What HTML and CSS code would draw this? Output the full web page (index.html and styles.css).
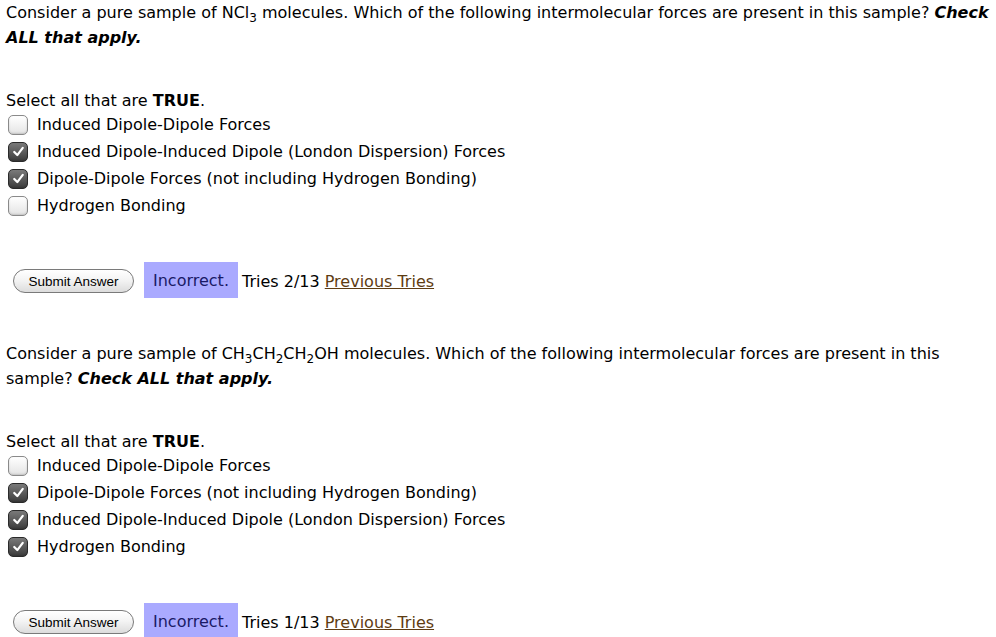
FILE: index.html
```html
<!DOCTYPE html>
<html>
<head>
  <title>Intermolecular Forces</title>
  <link rel="stylesheet" href="styles.css">
</head>
<body>
  <!-- Pergunta 1 -->
  <div class="questao">
    <p class="enunciado">Consider a pure sample of NCl<sub>3</sub> molecules. Which of the following intermolecular forces are present in this sample? <b><i>Check ALL that apply.</i></b></p>
    <p class="instrucao">Select all that are <b>TRUE</b>.</p>
    <ul class="opcoes">
      <li><span class="caixa"></span>Induced Dipole-Dipole Forces</li>
      <li><span class="caixa marcada"><svg viewBox="0 0 20 20"><path d="M5 10.5 L8.6 14.2 L15 5.8" /></svg></span>Induced Dipole-Induced Dipole (London Dispersion) Forces</li>
      <li><span class="caixa marcada"><svg viewBox="0 0 20 20"><path d="M5 10.5 L8.6 14.2 L15 5.8" /></svg></span>Dipole-Dipole Forces (not including Hydrogen Bonding)</li>
      <li><span class="caixa"></span>Hydrogen Bonding</li>
    </ul>
    <div class="resposta">
      <button class="botao-enviar">Submit Answer</button>
      <span class="incorreto">Incorrect.</span>
      <span class="tentativas">Tries 2/13 <a href="#">Previous Tries</a></span>
    </div>
  </div>

  <!-- Pergunta 2 -->
  <div class="questao">
    <p class="enunciado">Consider a pure sample of CH<sub>3</sub>CH<sub>2</sub>CH<sub>2</sub>OH molecules. Which of the following intermolecular forces are present in this sample? <b><i>Check ALL that apply.</i></b></p>
    <p class="instrucao">Select all that are <b>TRUE</b>.</p>
    <ul class="opcoes">
      <li><span class="caixa"></span>Induced Dipole-Dipole Forces</li>
      <li><span class="caixa marcada"><svg viewBox="0 0 20 20"><path d="M5 10.5 L8.6 14.2 L15 5.8" /></svg></span>Dipole-Dipole Forces (not including Hydrogen Bonding)</li>
      <li><span class="caixa marcada"><svg viewBox="0 0 20 20"><path d="M5 10.5 L8.6 14.2 L15 5.8" /></svg></span>Induced Dipole-Induced Dipole (London Dispersion) Forces</li>
      <li><span class="caixa marcada"><svg viewBox="0 0 20 20"><path d="M5 10.5 L8.6 14.2 L15 5.8" /></svg></span>Hydrogen Bonding</li>
    </ul>
    <div class="resposta">
      <button class="botao-enviar">Submit Answer</button>
      <span class="incorreto">Incorrect.</span>
      <span class="tentativas">Tries 1/13 <a href="#">Previous Tries</a></span>
    </div>
  </div>
</body>
</html>
```

FILE: styles.css
```css
/* Página base */
body {
  margin: 0;
  padding: 0 0 0 6px;
  background-color: #ffffff;
  color: #000000;
  font-family: "DejaVu Sans", Verdana, sans-serif;
  font-size: 16px;
}

.questao {
  margin-bottom: 43px;
}

.questao:last-child {
  margin-bottom: 0;
}

.enunciado {
  margin: 0;
  line-height: 25px;
}

sub {
  font-size: 12px;
  line-height: 12px;
  vertical-align: -4px;
}

.instrucao {
  margin: 40px 0 0 0;
  line-height: 21px;
}

.opcoes {
  list-style: none;
  margin: 0;
  padding: 0;
}

.opcoes li {
  display: flex;
  align-items: center;
  height: 27px;
}

.caixa {
  box-sizing: border-box;
  width: 20px;
  height: 20px;
  margin: 0 9px 0 2px;
  border: 1px solid #8a8a8a;
  border-radius: 5px;
  background: linear-gradient(#ffffff, #e4e4e4);
  box-shadow: inset 0 -1px 2px rgba(0, 0, 0, 0.15);
  display: flex;
  align-items: center;
  justify-content: center;
}

.caixa.marcada {
  border-color: #2a2a2a;
  background: linear-gradient(#7a7a7a, #3c3c3c);
}

.caixa svg {
  width: 17px;
  height: 17px;
}

.caixa svg path {
  fill: none;
  stroke: #ffffff;
  stroke-width: 2.6;
  stroke-linecap: round;
  stroke-linejoin: round;
}

.resposta {
  display: flex;
  align-items: center;
  height: 36px;
  margin-top: 43px;
}

.botao-enviar {
  box-sizing: border-box;
  width: 121px;
  height: 24px;
  margin: 2px 10px 0 7px;
  padding: 0;
  border: 1px solid #7a7a7a;
  border-radius: 12px;
  background: linear-gradient(#ffffff, #f4f4f4 45%, #dcdcdc);
  font-family: "Liberation Sans", Arial, sans-serif;
  font-size: 13.5px;
  color: #000000;
}

.incorreto {
  box-sizing: border-box;
  width: 94px;
  height: 36px;
  line-height: 38px;
  padding-left: 9px;
  background-color: #aaaaff;
  color: #1a1a66;
}

.tentativas {
  margin-left: 4px;
  padding-top: 2px;
}

.tentativas a {
  color: #5e3c12;
  text-decoration: underline;
}
```
